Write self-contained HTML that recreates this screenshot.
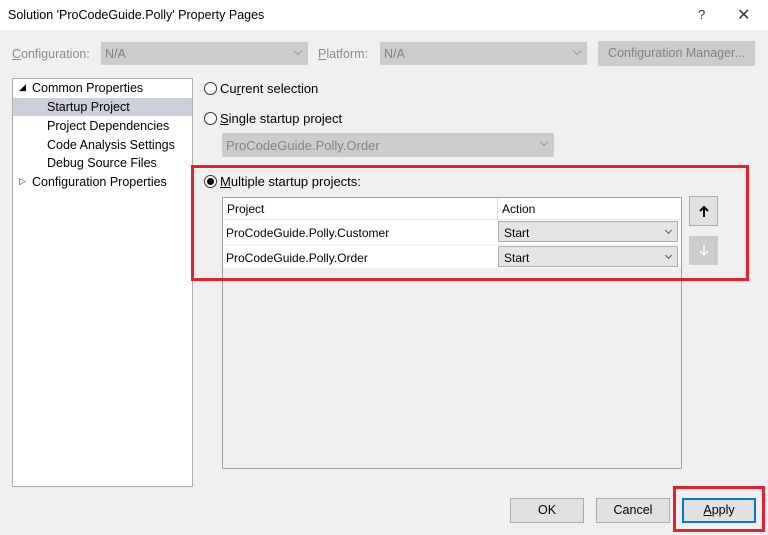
<!DOCTYPE html>
<html><head><style>
*{box-sizing:border-box;margin:0;padding:0}
body{width:768px;height:535px;background:#f0f0f0;font-family:"Liberation Sans",sans-serif;font-size:12px;color:#000;position:relative;overflow:hidden}
.a{position:absolute}
.combo{position:absolute;background:#cccccc;border:1px solid #cccccc;color:#838383;font-size:12.5px;padding:4px 0 0 3px}
.combo .ch{position:absolute;right:6px;top:5px;width:6px;height:6px;border-right:1px solid #999;border-bottom:1px solid #999;transform:rotate(45deg)}
.btn{position:absolute;background:#e1e1e1;border:1px solid #adadad;text-align:center;font-size:12.5px;line-height:22px}
.radio{position:absolute;width:13px;height:13px;border:1px solid #333;border-radius:50%;background:#fff}
.lbl{position:absolute;font-size:13px}
.dd{position:absolute;background:#e5e5e5;border:1px solid #acacac;font-size:12px;padding:4px 0 0 5px}
.dd .ch{position:absolute;right:6px;top:6px;width:5px;height:5px;border-right:1px solid #555;border-bottom:1px solid #555;transform:rotate(45deg)}
</style></head><body>
<div class="a" style="left:0;top:0;width:768px;height:30px;background:#fff"></div>
<div class="lbl" style="left:8px;top:8px;font-size:12.5px">Solution 'ProCodeGuide.Polly' Property Pages</div>
<div class="lbl" style="left:698px;top:7px;font-size:13px;color:#333">?</div>
<div class="lbl" style="left:737px;top:5px;font-size:16px;color:#333">✕</div>

<div class="lbl" style="left:12px;top:47px;color:#8a8a8a;font-size:12.5px"><u>C</u>onfiguration:</div>
<div class="combo" style="left:101px;top:42px;width:207px;height:23px">N/A<span class="ch"></span></div>
<div class="lbl" style="left:318px;top:47px;color:#8a8a8a;font-size:12.5px"><u>P</u>latform:</div>
<div class="combo" style="left:380px;top:42px;width:207px;height:23px">N/A<span class="ch"></span></div>
<div class="btn" style="left:598px;top:41px;width:157px;height:25px;background:#cccccc;border-color:#cccccc;color:#838383">Configuration Manager...</div>

<div class="a" style="left:12px;top:78px;width:181px;height:409px;background:#fff;border:1px solid #adadad"></div>
<div class="a" style="left:13px;top:98px;width:179px;height:18px;background:#cdd0dc"></div>
<div class="lbl" style="left:19px;top:82px;font-size:9px">◢</div>
<div class="lbl" style="left:32px;top:81px;font-size:12.5px">Common Properties</div>
<div class="lbl" style="left:47px;top:100px;font-size:12.5px">Startup Project</div>
<div class="lbl" style="left:47px;top:119px;font-size:12.5px">Project Dependencies</div>
<div class="lbl" style="left:47px;top:138px;font-size:12.5px">Code Analysis Settings</div>
<div class="lbl" style="left:47px;top:156px;font-size:12.5px">Debug Source Files</div>
<div class="lbl" style="left:19px;top:176px;font-size:9px;color:#444">▷</div>
<div class="lbl" style="left:32px;top:175px;font-size:12.5px">Configuration Properties</div>

<div class="radio" style="left:204px;top:82px"></div>
<div class="lbl" style="left:220px;top:81px">Cu<u>r</u>rent selection</div>
<div class="radio" style="left:204px;top:112px"></div>
<div class="lbl" style="left:220px;top:111px"><u>S</u>ingle startup project</div>
<div class="combo" style="left:222px;top:133px;width:332px;height:24px;font-size:13px">ProCodeGuide.Polly.Order<span class="ch"></span></div>
<div class="radio" style="left:204px;top:175px"><div class="a" style="left:2px;top:2px;width:7px;height:7px;border-radius:50%;background:#000"></div></div>
<div class="lbl" style="left:220px;top:174px"><u>M</u>ultiple startup projects:</div>

<div class="a" style="left:222px;top:197px;width:460px;height:272px;border:1px solid #a0a0a0;background:#efefef"></div>
<div class="a" style="left:223px;top:198px;width:458px;height:70px;background:#fff"></div>
<div class="a" style="left:497px;top:198px;width:1px;height:21px;background:#ddd"></div>
<div class="a" style="left:223px;top:219px;width:458px;height:1px;background:#e5e5e5"></div>
<div class="a" style="left:223px;top:244px;width:458px;height:1px;background:#eee"></div>
<div class="lbl" style="left:227px;top:202px;font-size:12px">Project</div>
<div class="lbl" style="left:502px;top:202px;font-size:12px">Action</div>
<div class="lbl" style="left:226px;top:226px;font-size:12px">ProCodeGuide.Polly.Customer</div>
<div class="lbl" style="left:226px;top:251px;font-size:12px">ProCodeGuide.Polly.Order</div>
<div class="dd" style="left:498px;top:221px;width:180px;height:21px">Start<span class="ch"></span></div>
<div class="dd" style="left:498px;top:246px;width:180px;height:21px">Start<span class="ch"></span></div>

<div class="btn" style="left:689px;top:196px;width:29px;height:30px"><svg class="a" style="left:9px;top:9px" width="10" height="11" viewBox="0 0 10 11"><path d="M5 1V11M1 5L5 1L9 5" stroke="#000" stroke-width="2" fill="none"/></svg></div>
<div class="btn" style="left:689px;top:236px;width:29px;height:29px;background:#cccccc;border-color:#cccccc"><svg class="a" style="left:9px;top:8px" width="10" height="11" viewBox="0 0 10 11"><path d="M5 0V10M1 6L5 10L9 6" stroke="#fff" stroke-width="1.5" fill="none"/></svg></div>

<div class="a" style="left:191px;top:165px;width:558px;height:116px;border:3px solid #e8202e"></div>

<div class="btn" style="left:510px;top:498px;width:74px;height:25px">OK</div>
<div class="btn" style="left:596px;top:498px;width:74px;height:25px">Cancel</div>
<div class="btn" style="left:682px;top:498px;width:74px;height:25px;border:2px solid #0078d7;line-height:21px"><u>A</u>pply</div>
<div class="a" style="left:673px;top:486px;width:92px;height:46px;border:3px solid #e8202e"></div>
</body></html>
